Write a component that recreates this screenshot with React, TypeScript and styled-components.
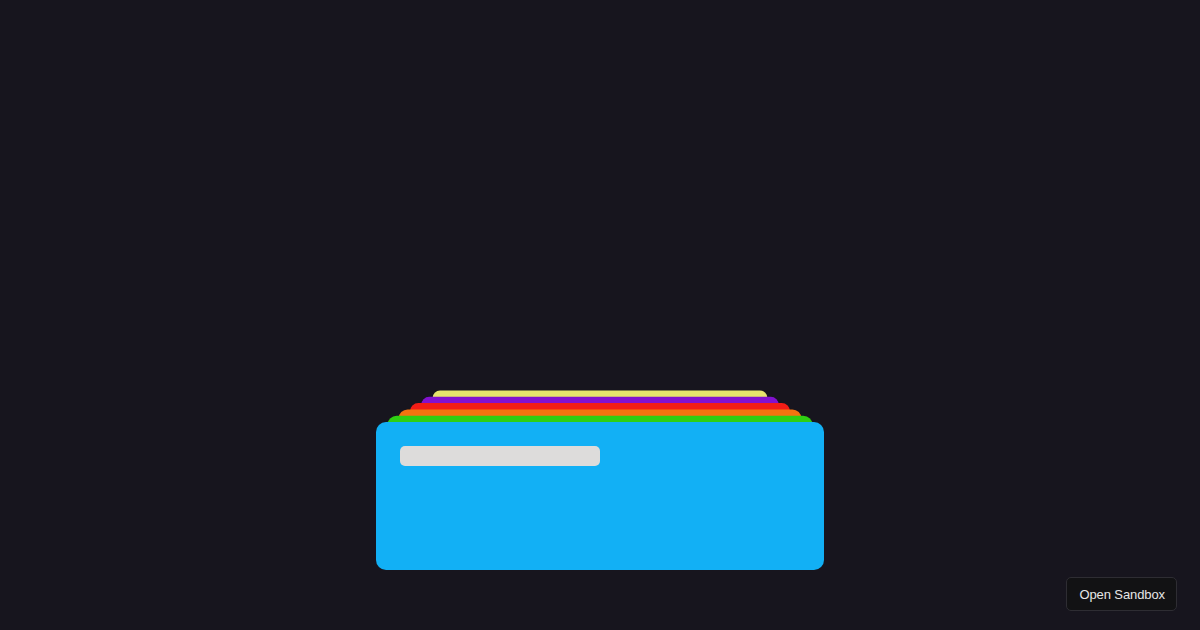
import React from "react";
import styled, { createGlobalStyle } from "styled-components";

const Global = createGlobalStyle`
  html, body { margin: 0; padding: 0; background: #17151e; }
  body { font-family: "Liberation Sans", Arial, sans-serif; }
`;

const Page = styled.div`
  width: 1200px;
  height: 630px;
  display: flex;
  flex-direction: column;
  align-items: center;
  justify-content: flex-end;
  padding-bottom: 60px;
  box-sizing: border-box;
  position: relative;
  overflow: hidden;
`;

const Stack = styled.div`
  position: relative;
  width: 448px;
  height: 148px;
`;

const BackCard = styled.div<{ $color: string; $depth: number }>`
  position: absolute;
  inset: 0;
  border-radius: 10px;
  background: ${(p) => p.$color};
  transform-origin: top center;
  transform: translateY(${(p) => -6.3 * p.$depth}px) scale(${(p) => 1 - 0.0505 * p.$depth});
  z-index: ${(p) => 10 - p.$depth};
`;

const FrontCard = styled.div`
  position: relative;
  z-index: 20;
  width: 448px;
  height: 148px;
  border-radius: 10px;
  background: #12b0f5;
  padding: 24px;
  box-sizing: border-box;
`;

const TitleBar = styled.div`
  width: 200px;
  height: 20px;
  border-radius: 5px;
  background: #dddcdb;
`;

const SandboxButton = styled.button`
  position: absolute;
  right: 23px;
  bottom: 19px;
  height: 34px;
  padding: 0 11px 0 12px;
  background: #121214;
  border: 1px solid #2e2d33;
  border-radius: 5px;
  color: #e6e6e6;
  font-family: "Liberation Sans", Arial, sans-serif;
  font-size: 13px;
  letter-spacing: -0.1px;
  cursor: pointer;
`;

const backs = ["#2fcf12", "#f4740f", "#f21d16", "#8211cf", "#e6e46c"];

export default function App() {
  return (
    <>
      <Global />
      <Page>
        <Stack>
          {backs.map((c, i) => (
            <BackCard key={c} $color={c} $depth={i + 1} />
          ))}
          <FrontCard>
            <TitleBar />
          </FrontCard>
        </Stack>
        <SandboxButton>Open Sandbox</SandboxButton>
      </Page>
    </>
  );
}
